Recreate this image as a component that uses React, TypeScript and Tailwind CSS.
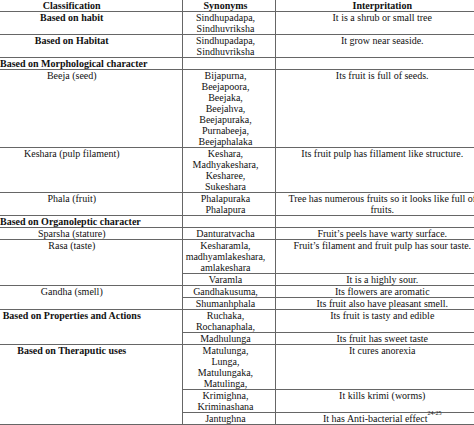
import React from 'react';

type Row = {
  cls?: { text: string; span?: number; bold?: boolean; left?: boolean };
  syn: string[];
  info: React.ReactNode;
};

const rows: Row[] = [
  { cls: { text: 'Based on habit', bold: true }, syn: ['Sindhupadapa,', 'Sindhuvriksha'], info: 'It is a shrub or small tree' },
  { cls: { text: 'Based on Habitat', bold: true }, syn: ['Sindhupadapa,', 'Sindhuvriksha'], info: 'It grow near seaside.' },
  { cls: { text: 'Based on Morphological character', bold: true, left: true }, syn: [], info: '' },
  {
    cls: { text: 'Beeja (seed)' },
    syn: ['Bijapurna,', 'Beejapoora,', 'Beejaka,', 'Beejahva,', 'Beejapuraka,', 'Purnabeeja,', 'Beejaphalaka'],
    info: 'Its fruit is full of seeds.',
  },
  {
    cls: { text: 'Keshara (pulp filament)' },
    syn: ['Keshara,', 'Madhyakeshara,', 'Kesharee,', 'Sukeshara'],
    info: 'Its fruit pulp has fillament like structure.',
  },
  {
    cls: { text: 'Phala (fruit)' },
    syn: ['Phalapuraka', 'Phalapura'],
    info: 'Tree has numerous fruits so it looks like full of fruits.',
  },
  { cls: { text: 'Based on Organoleptic character', bold: true, left: true }, syn: [], info: '' },
  { cls: { text: 'Sparsha (stature)' }, syn: ['Danturatvacha'], info: 'Fruit\u2019s peels have warty surface.' },
  {
    cls: { text: 'Rasa (taste)', span: 2 },
    syn: ['Kesharamla,', 'madhyamlakeshara,', 'amlakeshara'],
    info: 'Fruit\u2019s filament and fruit pulp has sour taste.',
  },
  { syn: ['Varamla'], info: 'It is a highly sour.' },
  { cls: { text: 'Gandha (smell)', span: 2 }, syn: ['Gandhakusuma,'], info: 'Its flowers are aromatic' },
  { syn: ['Shumanhphala'], info: 'Its fruit also have pleasant smell.' },
  {
    cls: { text: 'Based on Properties and Actions', span: 2, bold: true },
    syn: ['Ruchaka,', 'Rochanaphala,'],
    info: 'Its fruit is tasty and edible',
  },
  { syn: ['Madhulunga'], info: 'Its fruit has sweet taste' },
  {
    cls: { text: 'Based on Theraputic uses', span: 3, bold: true },
    syn: ['Matulunga,', 'Lunga,', 'Matulungaka,', 'Matulinga,'],
    info: 'It cures anorexia',
  },
  { syn: ['Krimighna,', 'Kriminashana'], info: 'It kills krimi (worms)' },
  {
    syn: ['Jantughna'],
    info: (
      <>
        It has Anti-bacterial effect
        <sup className="text-[6px] leading-none align-[4px]">24-25</sup>
      </>
    ),
  },
];

const line = 'border-[#666]';

export default function App() {
  return (
    <div
      className="w-[474px] h-[425px] overflow-hidden bg-white text-[#111]"
      style={{ fontFamily: '"Liberation Serif", "Times New Roman", serif' }}
    >
      <table className="w-[489px] table-fixed border-collapse text-[10px] leading-[11px]">
        <colgroup>
          <col className="w-[182px]" />
          <col className="w-[93px]" />
          <col className="w-[214px]" />
        </colgroup>
        <thead>
          <tr className="font-bold">
            <th className={`p-0 pr-[38px] text-center border-b border-r ${line}`}>Classification</th>
            <th className={`p-0 pr-[6px] text-center border-b border-r ${line}`}>Synonyms</th>
            <th className={`p-0 text-center border-b ${line}`}>Interpritation</th>
          </tr>
        </thead>
        <tbody>
          {rows.map((r, i) => (
            <tr key={i}>
              {r.cls && (
                <td
                  rowSpan={r.cls.span ?? 1}
                  className={`p-0 align-top border-b border-r ${line} ${r.cls.bold ? 'font-bold' : ''} ${
                    r.cls.left ? 'text-left whitespace-nowrap' : 'text-center pr-[38px]'
                  }`}
                >
                  {r.cls.text}
                </td>
              )}
              <td className={`p-0 pr-[6px] align-top text-center border-b border-r ${line}`}>
                {r.syn.length ? r.syn.map(s => <div key={s}>{s}</div>) : <div>&nbsp;</div>}
              </td>
              <td className={`p-0 px-[2px] align-top text-center border-b ${line}`}>{r.info || '\u00a0'}</td>
            </tr>
          ))}
        </tbody>
      </table>
    </div>
  );
}
